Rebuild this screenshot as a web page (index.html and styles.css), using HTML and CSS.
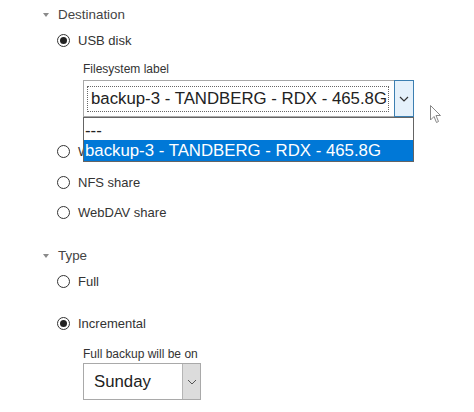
FILE: index.html
```html
<!DOCTYPE html>
<html>
<head>
<meta charset="utf-8">
<link rel="stylesheet" href="styles.css">
</head>
<body>
<div class="form">
  <div class="section">
    <div class="header"><span class="tri"></span><span>Destination</span></div>
    <div class="options">
      <div class="row r-usb"><span class="radio checked"></span><span>USB disk</span></div>
      <div class="sub s-fs">
        <div class="label">Filesystem label</div>
        <div class="select big">
          <div class="value"><span class="focus">backup-3 - TANDBERG - RDX - 465.8G</span></div>
          <div class="btn active"><svg width="10" height="6" viewBox="0 0 10 6"><path d="M1 1 L5 5 L9 1" fill="none" stroke="#333" stroke-width="1.2"/></svg></div>
          <div class="list">
            <div class="opt dash">---</div>
            <div class="opt sel">backup-3 - TANDBERG - RDX - 465.8G</div>
          </div>
        </div>
      </div>
      <div class="row r-win"><span class="radio"></span><span>Windows share</span></div>
      <div class="row r-nfs"><span class="radio"></span><span>NFS share</span></div>
      <div class="row r-dav"><span class="radio"></span><span>WebDAV share</span></div>
    </div>
  </div>
  <div class="section s-type">
    <div class="header"><span class="tri"></span><span>Type</span></div>
    <div class="options">
      <div class="row r-full"><span class="radio"></span><span>Full</span></div>
      <div class="row r-inc"><span class="radio checked"></span><span>Incremental</span></div>
      <div class="sub s-day">
        <div class="label">Full backup will be on</div>
        <div class="select small">
          <div class="value">Sunday</div>
          <div class="btn gray"><svg width="10" height="6" viewBox="0 0 10 6"><path d="M1 1 L5 5 L9 1" fill="none" stroke="#555" stroke-width="1"/></svg></div>
        </div>
      </div>
    </div>
  </div>
</div>
<svg class="cursor" width="12" height="19" viewBox="0 0 12 19"><path d="M0.5 0.5 L0.5 15 L4 11.5 L6.5 17.5 L8.5 16.5 L6 10.5 L10.5 10.5 Z" fill="#fff" stroke="#888" stroke-width="1"/></svg>
</body>
</html>
```

FILE: styles.css
```css
html, body {
  margin: 0;
  padding: 0;
  background: #fff;
}
body {
  font-family: "Liberation Sans", Arial, sans-serif;
  font-size: 12px;
  color: #333;
  width: 474px;
  height: 412px;
  position: relative;
  overflow: hidden;
}
.form {
  padding-top: 7px;
  padding-left: 43px;
}
.header {
  height: 16px;
  line-height: 16px;
  display: flex;
  align-items: center;
  color: #444;
  font-size: 13.4px;
}
.tri {
  width: 0;
  height: 0;
  border-left: 3.5px solid transparent;
  border-right: 3.5px solid transparent;
  border-top: 4px solid #8a8a8a;
  margin-right: 9px;
}
.options {
  padding-left: 14px;
}
.row {
  height: 20px;
  display: flex;
  align-items: center;
  color: #333;
  font-size: 13px;
  white-space: nowrap;
}
.radio {
  box-sizing: border-box;
  width: 13px;
  height: 13px;
  border: 1px solid #333;
  border-radius: 50%;
  margin-right: 8px;
  display: flex;
  align-items: center;
  justify-content: center;
  background: #fff;
  flex: none;
}
.radio.checked::after {
  content: "";
  width: 7px;
  height: 7px;
  border-radius: 50%;
  background: #222;
}
.r-usb { margin-top: 7px; }
.sub { padding-left: 26px; }
.s-fs { margin-top: 11px; }
.label {
  height: 16px;
  line-height: 16px;
  color: #333;
}
.select {
  position: relative;
  box-sizing: border-box;
  margin-top: 3px;
  border: 1px solid #a9a9a9;
  display: flex;
  background: #fff;
  white-space: nowrap;
}
.select.big {
  width: 331px;
  height: 37px;
  font-size: 16.8px;
}
.select.small {
  width: 118px;
  height: 37px;
  font-size: 16.8px;
  margin-top: 1px;
}
.value {
  flex: 1;
  display: flex;
  align-items: center;
  padding-left: 4px;
  color: #222;
}
.select.small .value { padding-left: 10px; }
.focus {
  outline: 1px dotted #666;
  padding: 3px 1px 3px 3px;
  line-height: 18px;
}
.btn {
  box-sizing: border-box;
  width: 19px;
  display: flex;
  align-items: center;
  justify-content: center;
}
.btn.active {
  background: #e5f1fb;
  border: 1px solid #3c7fb1;
  margin: -1px -1px -1px 0;
  width: 20px;
}
.btn.gray {
  background: #dcdcdc;
  border-left: 1px solid #b5b5b5;
  width: 18px;
}
.list {
  position: absolute;
  left: -1px;
  top: 36px;
  box-sizing: border-box;
  width: 331px;
  height: 45px;
  border: 1px solid #646464;
  background: #fff;
  z-index: 2;
}
.opt {
  height: 21px;
  line-height: 21px;
  font-size: 16.8px;
  color: #222;
  padding-left: 1px;
  white-space: nowrap;
}
.opt.dash {
  box-sizing: border-box;
  height: 22px;
  padding-top: 3px;
  line-height: 19px;
}
.opt.sel {
  background: #0078d7;
  color: #fff;
}
.r-win { margin-top: 24px; }
.r-nfs { margin-top: 11px; }
.r-dav { margin-top: 10px; }
.s-type { margin-top: 26px; }
.r-full { margin-top: 7px; }
.r-inc { margin-top: 22px; }
.s-day { margin-top: 13px; }
.cursor {
  position: absolute;
  left: 430px;
  top: 105px;
}
```
